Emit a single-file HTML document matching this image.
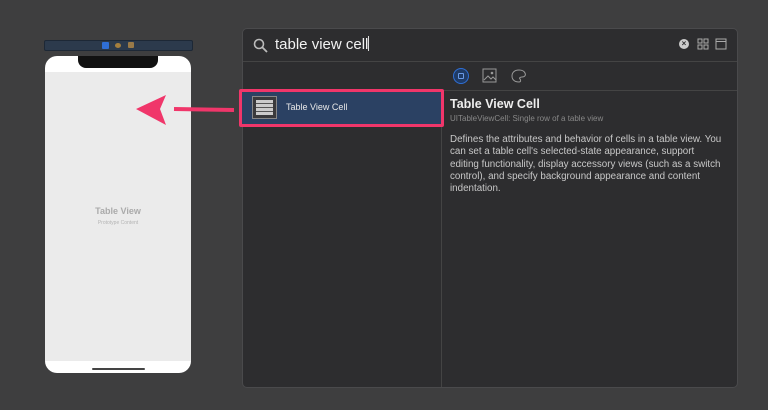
<!DOCTYPE html>
<html><head><style>
*{margin:0;padding:0;box-sizing:border-box}
body{width:768px;height:410px;background:#3e3e3f;position:relative;overflow:hidden;font-family:"Liberation Sans",sans-serif}
.a{position:absolute}
</style></head><body>
<!-- phone -->
<div class="a" style="left:44px;top:40px;width:149px;height:11px;background:#2c3a4c;border:1px solid #1d2836;border-radius:2px"></div>
<div class="a" style="left:102px;top:42px;width:7px;height:7px;background:#2f6fd6;border-radius:1px"></div>
<div class="a" style="left:115px;top:43px;width:6px;height:5px;background:#a57f3d;border-radius:50%"></div>
<div class="a" style="left:128px;top:42px;width:6px;height:6px;background:#9a7a48;border-radius:1px"></div>
<div class="a" style="left:45px;top:56px;width:146px;height:317px;background:#fff;border-radius:12px;overflow:hidden">
 <div class="a" style="left:0;top:16px;width:146px;height:289px;background:#ebebeb"></div>
 <div class="a" style="left:33px;top:-2px;width:80px;height:14px;background:#111;border-radius:0 0 8px 8px"></div>
 <div class="a" style="left:47px;top:312px;width:53px;height:2px;background:#444;border-radius:1px"></div>
 <div class="a" style="left:0;top:150px;width:146px;text-align:center;color:#aaa;font-size:9px;font-weight:bold">Table View</div>
 <div class="a" style="left:0;top:164px;width:146px;text-align:center;color:#b4b4b4;font-size:5px">Prototype Content</div>
</div>
<!-- arrow -->
<svg class="a" style="left:134px;top:94px" width="100" height="34"><path d="M100 16 L40 15" stroke="#f0366a" stroke-width="4"/><path d="M2 15 L32 1 L26 15 L32 31 Z" fill="#f0366a"/></svg>
<!-- panel -->
<div class="a" style="left:242px;top:28px;width:496px;height:360px;background:#2d2d2f;border:1px solid #4a4a4c;border-radius:5px;overflow:hidden">
 <svg class="a" style="left:10px;top:9px" width="16" height="16"><circle cx="6" cy="6" r="4.5" fill="none" stroke="#bbb" stroke-width="1.6"/><path d="M9.5 9.5 L14 14" stroke="#bbb" stroke-width="1.8"/></svg>
 <div class="a" style="left:32px;top:7px;color:#f2f2f2;font-size:15px">table view cell<span style="display:inline-block;width:1px;height:15px;background:#ddd;vertical-align:-2px"></span></div>
 <div class="a" style="left:436px;top:10px;width:10px;height:10px;border-radius:50%;background:#ccc;color:#2c2c2e;font-size:8px;text-align:center;line-height:10px;font-weight:bold">×</div>
 <svg class="a" style="left:454px;top:9px" width="12" height="12"><g fill="none" stroke="#aaa"><rect x="1" y="1" width="4" height="4"/><rect x="7" y="1" width="4" height="4"/><rect x="1" y="7" width="4" height="4"/><rect x="7" y="7" width="4" height="4"/></g></svg>
 <svg class="a" style="left:472px;top:9px" width="12" height="12"><rect x="1" y="1" width="10" height="10" fill="none" stroke="#aaa"/><path d="M1 3.5H11" stroke="#aaa"/></svg>
 <div class="a" style="left:0;top:32px;width:496px;height:1px;background:#444"></div>
 <div class="a" style="left:210px;top:39px;width:16px;height:16px;border-radius:50%;border:1.5px solid #2f6fd6;background:#1f3b66"></div>
 <div class="a" style="left:215px;top:44px;width:6px;height:6px;border:1px solid #6a9ae6;border-radius:1px"></div>
 <svg class="a" style="left:239px;top:39px" width="16" height="16"><rect x="1" y="1" width="13" height="13" fill="none" stroke="#999"/><path d="M2 12 L6 8 L9 11 L11 9 L14 12" fill="none" stroke="#999"/><circle cx="10" cy="5" r="1.3" fill="#999"/></svg>
 <svg class="a" style="left:268px;top:40px" width="16" height="14"><path d="M8 1 C3 1 1 4 1 7 C1 11 4 13 8 13 C10 13 10 11 9 10 C8 9 9 8 11 8 C14 8 15 6 14 4 C13 2 11 1 8 1Z" fill="none" stroke="#999"/></svg>
 <div class="a" style="left:0;top:61px;width:496px;height:1px;background:#444"></div>
 <div class="a" style="left:198px;top:61px;width:1px;height:300px;background:#444"></div>
 <div class="a" style="left:207px;top:68px;color:#eee;font-size:12.5px;font-weight:bold">Table View Cell</div>
 <div class="a" style="left:207px;top:85px;color:#888;font-size:8px">UITableViewCell: Single row of a table view</div>
 <div class="a" style="left:207px;top:105px;white-space:nowrap;color:#c8c8c8;font-size:9.8px;line-height:12.3px">Defines the attributes and behavior of cells in a table view. You<br>can set a table cell's selected-state appearance, support<br>editing functionality, display accessory views (such as a switch<br>control), and specify background appearance and content<br>indentation.</div>
</div>
<!-- selected cell -->
<div class="a" style="left:239px;top:89px;width:205px;height:38px;border:3px solid #f0366a;border-radius:2px;background:#2b4163"></div>
<div class="a" style="left:252px;top:96px;width:25px;height:23px;border:1px solid #888;background:#3a3a3c"></div>
<div class="a" style="left:256px;top:100px;width:17px;height:15px;background:repeating-linear-gradient(#ccc 0 3px,#555 3px 4px)"></div>
<div class="a" style="left:286px;top:102px;color:#e8e8e8;font-size:9px">Table View Cell</div>
</body></html>
